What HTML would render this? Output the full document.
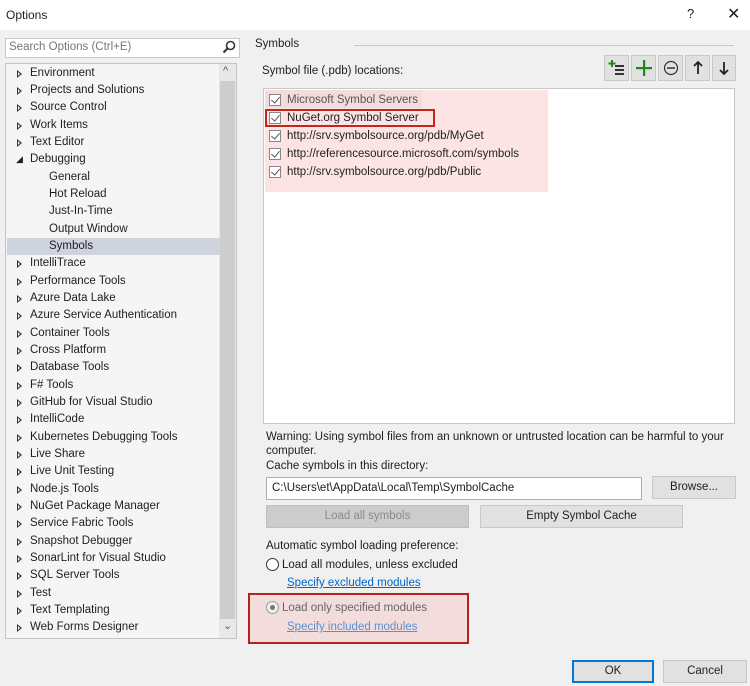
<!DOCTYPE html>
<html><head><meta charset="utf-8"><style>
*{margin:0;padding:0;box-sizing:border-box}
body{width:750px;height:686px;background:#f0f0f0;font-family:"Liberation Sans",sans-serif;font-size:11.5px;color:#1e1e1e;position:relative;overflow:hidden}
.a{position:absolute;white-space:nowrap}
.tb{position:absolute;left:0;top:0;width:750px;height:30px;background:#fff}
.tree{position:absolute;left:5px;top:63px;width:232px;height:576px;background:#f5f5f5;border:1px solid #c4c4c4}
.row{position:absolute;left:1px;width:213px;height:17px;line-height:17px}
.tri{position:absolute;left:10px;top:5px;width:0;height:0;border-top:4px solid transparent;border-bottom:4px solid transparent;border-left:5px solid #333}
.tri:after{content:"";position:absolute;left:-4px;top:-2px;border-top:2px solid transparent;border-bottom:2px solid transparent;border-left:2px solid #f5f5f5}
.btn{position:absolute;background:#e1e1e1;border:1px solid #c8c8c8;text-align:center;line-height:21px}
.cb{position:absolute;left:4px;top:3px;width:12px;height:12px;border:1px solid #888;background:#fff}
.cb:after{content:"";position:absolute;left:3px;top:0px;width:4px;height:7px;border-right:1.5px solid #555;border-bottom:1.5px solid #555;transform:rotate(40deg)}
.li{position:absolute;left:1px;height:18px;line-height:18px;padding-left:22px}
a{color:#0066cc;text-decoration:underline}
</style></head><body>
<div class="tb"></div>
<div class="a" style="left:6px;top:8px;font-size:12px">Options</div>
<div class="a" style="left:687px;top:6px;font-size:13px">?</div>
<div class="a" style="left:727px;top:4px;font-size:16px">✕</div>

<div class="a" style="left:5px;top:38px;width:235px;height:20px;background:#fff;border:1px solid #c8c8c8"></div>
<div class="a" style="left:9px;top:41px;color:#777">Search Options (Ctrl+E)</div>
<svg class="a" style="left:222px;top:40px" width="14" height="14"><circle cx="8.5" cy="5.5" r="4" fill="none" stroke="#333" stroke-width="1.6"/><line x1="5.5" y1="8.5" x2="1.5" y2="12.5" stroke="#333" stroke-width="2"/></svg>

<div class="tree">
<div class="a" style="left:213px;top:0;width:17px;height:574px;background:#e8e8e8"></div>
<div class="a" style="left:214px;top:17px;width:15px;height:538px;background:#cdcdcd"></div>
<div class="a" style="left:217px;top:1px;font-size:11px;color:#555">^</div>
<div class="a" style="left:217px;top:555px;font-size:11px;color:#555">⌄</div>
<div class="row" style="top:1px"><span class="tri"></span><span class="a" style="left:23px">Environment</span></div>
<div class="row" style="top:18px"><span class="tri"></span><span class="a" style="left:23px">Projects and Solutions</span></div>
<div class="row" style="top:35px"><span class="tri"></span><span class="a" style="left:23px">Source Control</span></div>
<div class="row" style="top:53px"><span class="tri"></span><span class="a" style="left:23px">Work Items</span></div>
<div class="row" style="top:70px"><span class="tri"></span><span class="a" style="left:23px">Text Editor</span></div>
<div class="row" style="top:87px"><span class="a" style="left:9px;top:0;font-size:9px">◢</span><span class="a" style="left:23px">Debugging</span></div>
<div class="row" style="top:105px"><span class="a" style="left:42px">General</span></div>
<div class="row" style="top:122px"><span class="a" style="left:42px">Hot Reload</span></div>
<div class="row" style="top:139px"><span class="a" style="left:42px">Just-In-Time</span></div>
<div class="row" style="top:157px"><span class="a" style="left:42px">Output Window</span></div>
<div class="row" style="top:174px;background:#cfd3dd"><span class="a" style="left:42px">Symbols</span></div>
<div class="row" style="top:191px"><span class="tri"></span><span class="a" style="left:23px">IntelliTrace</span></div>
<div class="row" style="top:209px"><span class="tri"></span><span class="a" style="left:23px">Performance Tools</span></div>
<div class="row" style="top:226px"><span class="tri"></span><span class="a" style="left:23px">Azure Data Lake</span></div>
<div class="row" style="top:243px"><span class="tri"></span><span class="a" style="left:23px">Azure Service Authentication</span></div>
<div class="row" style="top:261px"><span class="tri"></span><span class="a" style="left:23px">Container Tools</span></div>
<div class="row" style="top:278px"><span class="tri"></span><span class="a" style="left:23px">Cross Platform</span></div>
<div class="row" style="top:295px"><span class="tri"></span><span class="a" style="left:23px">Database Tools</span></div>
<div class="row" style="top:313px"><span class="tri"></span><span class="a" style="left:23px">F# Tools</span></div>
<div class="row" style="top:330px"><span class="tri"></span><span class="a" style="left:23px">GitHub for Visual Studio</span></div>
<div class="row" style="top:347px"><span class="tri"></span><span class="a" style="left:23px">IntelliCode</span></div>
<div class="row" style="top:365px"><span class="tri"></span><span class="a" style="left:23px">Kubernetes Debugging Tools</span></div>
<div class="row" style="top:382px"><span class="tri"></span><span class="a" style="left:23px">Live Share</span></div>
<div class="row" style="top:399px"><span class="tri"></span><span class="a" style="left:23px">Live Unit Testing</span></div>
<div class="row" style="top:417px"><span class="tri"></span><span class="a" style="left:23px">Node.js Tools</span></div>
<div class="row" style="top:434px"><span class="tri"></span><span class="a" style="left:23px">NuGet Package Manager</span></div>
<div class="row" style="top:451px"><span class="tri"></span><span class="a" style="left:23px">Service Fabric Tools</span></div>
<div class="row" style="top:469px"><span class="tri"></span><span class="a" style="left:23px">Snapshot Debugger</span></div>
<div class="row" style="top:486px"><span class="tri"></span><span class="a" style="left:23px">SonarLint for Visual Studio</span></div>
<div class="row" style="top:503px"><span class="tri"></span><span class="a" style="left:23px">SQL Server Tools</span></div>
<div class="row" style="top:521px"><span class="tri"></span><span class="a" style="left:23px">Test</span></div>
<div class="row" style="top:538px"><span class="tri"></span><span class="a" style="left:23px">Text Templating</span></div>
<div class="row" style="top:555px"><span class="tri"></span><span class="a" style="left:23px">Web Forms Designer</span></div>
</div>

<div class="a" style="left:255px;top:38px">Symbols</div>
<div class="a" style="left:354px;top:45px;width:380px;height:1px;background:#c8c8c8"></div>
<div class="a" style="left:262px;top:65px">Symbol file (.pdb) locations:</div>

<div class="btn" style="left:604px;top:55px;width:25px;height:26px"><svg width="18" height="18" style="margin-top:3px"><rect x="7" y="6" width="9" height="2" fill="#333"/><rect x="7" y="10" width="9" height="2" fill="#333"/><rect x="7" y="14" width="9" height="2" fill="#333"/><rect x="3" y="1" width="2" height="7" fill="#1a8a1a"/><rect x="0.5" y="3.5" width="7" height="2" fill="#1a8a1a"/></svg></div>
<div class="btn" style="left:631px;top:55px;width:25px;height:26px"><svg width="18" height="18" style="margin-top:3px"><rect x="8" y="1" width="2.2" height="16" fill="#1a8a1a"/><rect x="1" y="8" width="16" height="2.2" fill="#1a8a1a"/></svg></div>
<div class="btn" style="left:658px;top:55px;width:25px;height:26px"><svg width="16" height="16" style="margin-top:4px"><circle cx="8" cy="8" r="6.5" fill="none" stroke="#333" stroke-width="1.2"/><rect x="4" y="7.3" width="8" height="1.5" fill="#333"/></svg></div>
<div class="btn" style="left:685px;top:55px;width:25px;height:26px"><svg width="12" height="14" style="margin-top:5px"><path d="M6 1v12M2 5l4-4 4 4" fill="none" stroke="#222" stroke-width="1.8"/></svg></div>
<div class="btn" style="left:712px;top:55px;width:24px;height:26px"><svg width="12" height="14" style="margin-top:5px"><path d="M6 1v12M2 9l4 4 4-4" fill="none" stroke="#222" stroke-width="1.8"/></svg></div>

<div class="a" style="left:263px;top:88px;width:472px;height:336px;background:#fff;border:1px solid #c8c8c8">
<div class="a" style="left:1px;top:1px;width:283px;height:102px;background:#fde4e4"></div>
<div class="a" style="left:1px;top:1px;width:157px;height:18px;background:#f2dcdc"></div>
<div class="li" style="top:2px;color:#555"><span class="cb"></span>Microsoft Symbol Servers</div>
<div class="li" style="top:20px"><span class="cb"></span>NuGet.org Symbol Server</div>
<div class="a" style="left:1px;top:20px;width:170px;height:18px;border:2px solid #c0281e"></div>
<div class="li" style="top:38px"><span class="cb"></span>http://srv.symbolsource.org/pdb/MyGet</div>
<div class="li" style="top:56px"><span class="cb"></span>http://referencesource.microsoft.com/symbols</div>
<div class="li" style="top:74px"><span class="cb"></span>http://srv.symbolsource.org/pdb/Public</div>
</div>

<div class="a" style="left:266px;top:430px;line-height:14px;white-space:normal;width:470px">Warning: Using symbol files from an unknown or untrusted location can be harmful to your computer.</div>
<div class="a" style="left:266px;top:460px">Cache symbols in this directory:</div>
<div class="a" style="left:266px;top:477px;width:376px;height:23px;background:#fff;border:1px solid #adadad;padding:4px 5px">C:\Users\et\AppData\Local\Temp\SymbolCache</div>
<div class="btn" style="left:652px;top:476px;width:84px;height:23px">Browse...</div>
<div class="btn" style="left:266px;top:505px;width:203px;height:23px;background:#cccccc;border-color:#bfbfbf;color:#8a8a8a">Load all symbols</div>
<div class="btn" style="left:480px;top:505px;width:203px;height:23px">Empty Symbol Cache</div>
<div class="a" style="left:266px;top:540px">Automatic symbol loading preference:</div>
<div class="a" style="left:266px;top:558px;width:13px;height:13px;border:1px solid #333;border-radius:50%;background:#fff"></div>
<div class="a" style="left:282px;top:559px">Load all modules, unless excluded</div>
<div class="a" style="left:287px;top:577px"><a>Specify excluded modules</a></div>
<div class="a" style="left:248px;top:593px;width:221px;height:51px;background:#f3dcdc;border:2px solid #b52418"></div>
<div class="a" style="left:266px;top:601px;width:13px;height:13px;border:1px solid #999;border-radius:50%;background:#f0f0f0"><div style="position:absolute;left:3px;top:3px;width:5px;height:5px;border-radius:50%;background:#777"></div></div>
<div class="a" style="left:282px;top:602px;color:#666">Load only specified modules</div>
<div class="a" style="left:287px;top:621px"><a style="color:#5b8fd0">Specify included modules</a></div>

<div class="btn" style="left:572px;top:660px;width:82px;height:23px;border:2px solid #0078d7;line-height:19px">OK</div>
<div class="btn" style="left:663px;top:660px;width:84px;height:23px">Cancel</div>
</body></html>
